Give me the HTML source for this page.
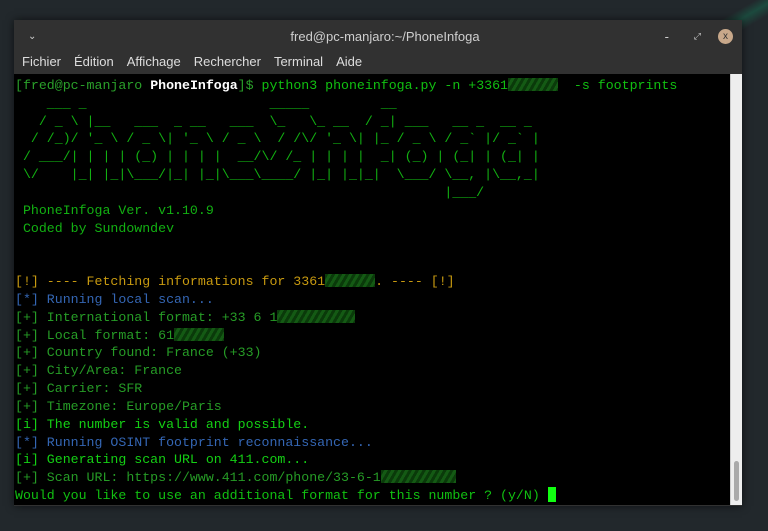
<!DOCTYPE html>
<html><head><meta charset="utf-8"><style>
*{margin:0;padding:0;box-sizing:border-box}
body{width:768px;height:531px;overflow:hidden;background:#22282c;font-family:"Liberation Sans",sans-serif;position:relative}
.deco{position:absolute;left:690px;top:-30px;width:140px;height:70px;background:linear-gradient(150deg,transparent 45%,#1c4a3e 52%,transparent 60%);}
.win{position:absolute;left:14px;top:20px;width:728px;height:486px;background:#313131;box-shadow:0 0 8px rgba(0,0,0,.6)}
.title{height:33px;color:#cfcfcf;font-size:13px;text-align:center;line-height:33px;position:relative;padding-left:14px}
.menu{height:21px;color:#ddd;font-size:13px;line-height:18px;padding-left:8px}
.menu span{margin-right:13px}
.term{position:absolute;left:0;top:54px;width:716px;height:431px;background:#000;overflow:hidden}
.sb{position:absolute;left:716px;top:54px;width:12px;height:431px;background:#eee;border-left:1px solid #ccc}
.thumb{position:absolute;left:3px;top:387px;width:5px;height:40px;background:#aaa;border-radius:3px}
pre{font-family:"Liberation Mono",monospace;font-size:13.25px;line-height:17.83px;color:#11c011;padding:3px 0 0 1px;white-space:pre}
.b{color:#2aa02a}.bn{color:#12b012}.y{color:#c89a10}.u{color:#3466b4}.d{color:#269c26}.g{color:#14d014}.w{color:#fff;font-weight:bold}
.r{display:inline-block;background:repeating-linear-gradient(120deg,#0a3a0a 0 3px,#145a14 3px 6px);height:13px;vertical-align:-2px}
.cur{display:inline-block;width:8px;height:15px;background:#1f1;vertical-align:-3px}
</style></head><body>
<div class="deco"></div>
<div class="win">
<div class="title"><span style="position:absolute;left:14px;font-size:10px">&#8964;</span>fred@pc-manjaro:~/PhoneInfoga
<span style="position:absolute;right:73px">-</span><span style="position:absolute;right:41px;font-size:9px">&#10530;</span><span style="position:absolute;right:9px;top:9px;width:15px;height:15px;border-radius:50%;background:#c8a88a;color:#333;font-size:10px;line-height:15px;padding:0">x</span></div>
<div class="menu"><span>Fichier</span><span>Édition</span><span>Affichage</span><span>Rechercher</span><span>Terminal</span><span>Aide</span></div>
<div class="term"><pre><span class="b">[fred@pc-manjaro </span><span class="w">PhoneInfoga</span><span class="b">]$</span> python3 phoneinfoga.py -n +3361<span class="r" style="width:50px"></span>  -s footprints
<span class="bn">    ___ _                       _____         __
   / _ \ |__   ___  _ __   ___  \_   \_ __  / _| ___   __ _  __ _
  / /_)/ '_ \ / _ \| '_ \ / _ \  / /\/ '_ \| |_ / _ \ / _` |/ _` |
 / ___/| | | | (_) | | | |  __/\/ /_ | | | |  _| (_) | (_| | (_| |
 \/    |_| |_|\___/|_| |_|\___\____/ |_| |_|_|  \___/ \__, |\__,_|
                                                      |___/
 PhoneInfoga Ver. v1.10.9
 Coded by Sundowndev</span>


<span class="y">[!] ---- Fetching informations for 3361<span class="r" style="width:50px"></span>. ---- [!]</span>
<span class="u">[*] Running local scan...</span>
<span class="d">[+] International format: +33 6 1<span class="r" style="width:78px"></span></span>
<span class="d">[+] Local format: 61<span class="r" style="width:50px"></span></span>
<span class="d">[+] Country found: France (+33)</span>
<span class="d">[+] City/Area: France</span>
<span class="d">[+] Carrier: SFR</span>
<span class="d">[+] Timezone: Europe/Paris</span>
<span class="g">[i] The number is valid and possible.</span>
<span class="u">[*] Running OSINT footprint reconnaissance...</span>
<span class="g">[i] Generating scan URL on 411.com...</span>
<span class="d">[+] Scan URL: https://www.411.com/phone/33-6-1<span class="r" style="width:75px"></span></span>
Would you like to use an additional format for this number ? (y/N) <span class="cur"></span></pre></div>
<div class="sb"><div class="thumb"></div></div>
</div>
</body></html>
